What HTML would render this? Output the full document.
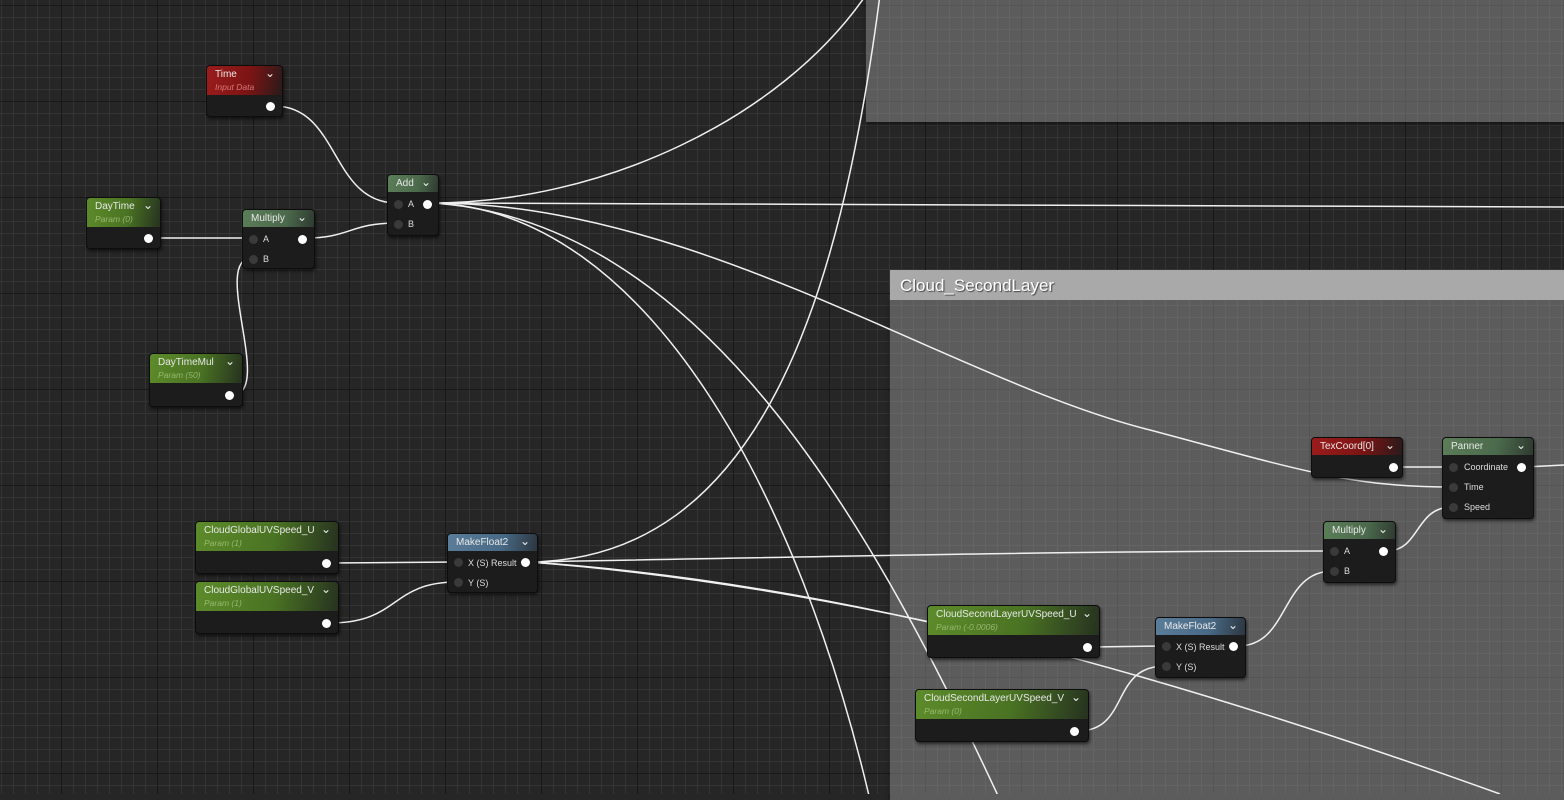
<!DOCTYPE html>
<html><head><meta charset="utf-8"><style>
*{margin:0;padding:0;box-sizing:border-box}
body{width:1564px;height:794px;overflow:hidden;background:#262626;font-family:"Liberation Sans",sans-serif;position:relative}
.grid{position:absolute;left:0;top:0;width:1564px;height:794px;
background-image:
linear-gradient(to right,#181818 1px,transparent 1px),
linear-gradient(to bottom,#181818 1px,transparent 1px),
linear-gradient(to right,#343434 1px,transparent 1px),
linear-gradient(to bottom,#343434 1px,transparent 1px);
background-size:96px 96px,96px 96px,12px 12px,12px 12px;
background-position:61px 5px,61px 5px,1px 5px,1px 5px}
.cm{position:absolute;background:rgba(160,160,160,0.45);box-shadow:0 2px 4px rgba(0,0,0,.5)}
.cmh{position:absolute;background:#a9a9a9;color:#fff;font-size:17px;padding:6px 10px;text-shadow:1px 1px 1px #444}
svg{position:absolute;left:0;top:0}
.n{position:absolute;background:#1b1c1b;border:1px solid #0d0d0d;border-radius:4px;box-shadow:1px 2px 3px rgba(0,0,0,.6);color:#ddd;font-size:9px}
.h{border-radius:3px 3px 0 0;padding:3px 8px;font-size:10px;color:#e8e8e8;position:relative}
.h i{display:block;font-size:8.5px;opacity:.8;margin-top:2px}
.h:after{content:"⌄";position:absolute;right:7px;top:0px;font-size:12px;color:#eee}
.g{background:linear-gradient(100deg,#5d8b2a 0%,#4a7323 55%,#263220 100%)}
.g i{color:#a6c781}
.r{background:linear-gradient(100deg,#9b1c1c 0%,#7d1414 55%,#2a1a1a 100%)}
.r i{color:#e69090}
.m{background:linear-gradient(100deg,#5b7d58,#4b6a4c 60%,#2f3a30)}
.b{background:linear-gradient(100deg,#5a7d9a,#486a86 60%,#2c3640)}
.p{position:absolute;font-size:9px;color:#ddd}
.pi{position:absolute;width:9px;height:9px;border-radius:50%;background:#3a3a3a}
.po{position:absolute;width:9px;height:9px;border-radius:50%;background:#fff}
</style></head><body>
<div class="grid"></div>
<div class="cm" style="left:866px;top:-10px;width:710px;height:132px"></div>
<div class="cm" style="left:890px;top:300px;width:680px;height:500px"></div>
<div class="cmh" style="left:890px;top:270px;width:680px;height:30px">Cloud_SecondLayer</div>
<svg width="1564" height="794" fill="none" stroke="#f0f0f0" stroke-width="1.5">
<path d="M274,106 C340,106 330,203 397,203"/>
<path d="M152,238 L252,238"/>
<path d="M232,395 C275,395 210,258 252,258"/>
<path d="M306,238 C350,238 350,223 397,223"/>
<path d="M432,203 C600,203 780,120 866,-5"/>
<path d="M432,203 C700,205 1000,207 1564,207"/>
<path d="M432,203 C700,203 950,380 1150,430 C1300,470 1350,487 1452,487"/>
<path d="M432,203 C650,210 800,500 870,800"/>
<path d="M432,203 C700,220 870,520 1000,800"/>
<path d="M529,562 C760,560 840,300 880,-5"/>
<path d="M529,562 C900,555 1100,551 1333,551"/>
<path d="M529,562 C700,575 850,605 930,622"/>
<path d="M529,562 C800,580 1100,650 1500,794"/>
<path d="M330,563 L457,562"/>
<path d="M330,623 C400,623 390,582 457,582"/>
<path d="M1091,647 L1165,646"/>
<path d="M1078,731 C1130,731 1110,666 1165,666"/>
<path d="M1238,646 C1290,646 1280,571 1333,571"/>
<path d="M1394,467 L1452,467"/>
<path d="M1387,551 C1420,551 1415,507 1452,507"/>
<path d="M1525,467 L1564,465"/>
</svg>

<div class="n" style="left:206px;top:65px;width:77px;height:52px"><div class="h r">Time<i>Input Data</i></div><div class="po" style="left:59px;top:36px"></div></div>
<div class="n" style="left:86px;top:197px;width:75px;height:52px"><div class="h g">DayTime<i>Param (0)</i></div><div class="po" style="left:57px;top:36px"></div></div>
<div class="n" style="left:149px;top:353px;width:94px;height:54px"><div class="h g">DayTimeMul<i>Param (50)</i></div><div class="po" style="left:75px;top:37px"></div></div>

<div class="n" style="left:242px;top:209px;width:73px;height:60px"><div class="h m">Multiply</div>
<div class="pi" style="left:6px;top:25px"></div><div class="p" style="left:20px;top:24px">A</div>
<div class="pi" style="left:6px;top:45px"></div><div class="p" style="left:20px;top:44px">B</div>
<div class="po" style="left:55px;top:25px"></div></div>

<div class="n" style="left:387px;top:174px;width:52px;height:62px"><div class="h m">Add</div>
<div class="pi" style="left:6px;top:25px"></div><div class="p" style="left:20px;top:24px">A</div>
<div class="pi" style="left:6px;top:45px"></div><div class="p" style="left:20px;top:44px">B</div>
<div class="po" style="left:35px;top:25px"></div></div>

<div class="n" style="left:195px;top:521px;width:144px;height:53px"><div class="h g">CloudGlobalUVSpeed_U<i>Param (1)</i></div><div class="po" style="left:126px;top:37px"></div></div>
<div class="n" style="left:195px;top:581px;width:144px;height:53px"><div class="h g">CloudGlobalUVSpeed_V<i>Param (1)</i></div><div class="po" style="left:126px;top:37px"></div></div>

<div class="n" style="left:447px;top:533px;width:91px;height:60px"><div class="h b" style="padding-right:20px">MakeFloat2</div>
<div class="pi" style="left:6px;top:24px"></div><div class="p" style="left:20px;top:24px">X (S) Result</div>
<div class="pi" style="left:6px;top:44px"></div><div class="p" style="left:20px;top:44px">Y (S)</div>
<div class="po" style="left:73px;top:24px"></div></div>

<div class="n" style="left:1311px;top:437px;width:92px;height:41px"><div class="h r">TexCoord[0]</div><div class="po" style="left:77px;top:25px"></div></div>

<div class="n" style="left:1442px;top:437px;width:92px;height:82px"><div class="h m">Panner</div>
<div class="pi" style="left:6px;top:25px"></div><div class="p" style="left:21px;top:24px">Coordinate</div>
<div class="pi" style="left:6px;top:45px"></div><div class="p" style="left:21px;top:44px">Time</div>
<div class="pi" style="left:6px;top:65px"></div><div class="p" style="left:21px;top:64px">Speed</div>
<div class="po" style="left:74px;top:25px"></div></div>

<div class="n" style="left:1323px;top:521px;width:73px;height:62px"><div class="h m">Multiply</div>
<div class="pi" style="left:6px;top:25px"></div><div class="p" style="left:20px;top:24px">A</div>
<div class="pi" style="left:6px;top:45px"></div><div class="p" style="left:20px;top:44px">B</div>
<div class="po" style="left:55px;top:25px"></div></div>

<div class="n" style="left:927px;top:605px;width:173px;height:53px"><div class="h g">CloudSecondLayerUVSpeed_U<i>Param (-0.0006)</i></div><div class="po" style="left:155px;top:37px"></div></div>
<div class="n" style="left:915px;top:689px;width:174px;height:53px"><div class="h g">CloudSecondLayerUVSpeed_V<i>Param (0)</i></div><div class="po" style="left:154px;top:37px"></div></div>

<div class="n" style="left:1155px;top:617px;width:91px;height:61px"><div class="h b" style="padding-right:20px">MakeFloat2</div>
<div class="pi" style="left:6px;top:24px"></div><div class="p" style="left:20px;top:24px">X (S) Result</div>
<div class="pi" style="left:6px;top:44px"></div><div class="p" style="left:20px;top:44px">Y (S)</div>
<div class="po" style="left:73px;top:24px"></div></div>
</body></html>
